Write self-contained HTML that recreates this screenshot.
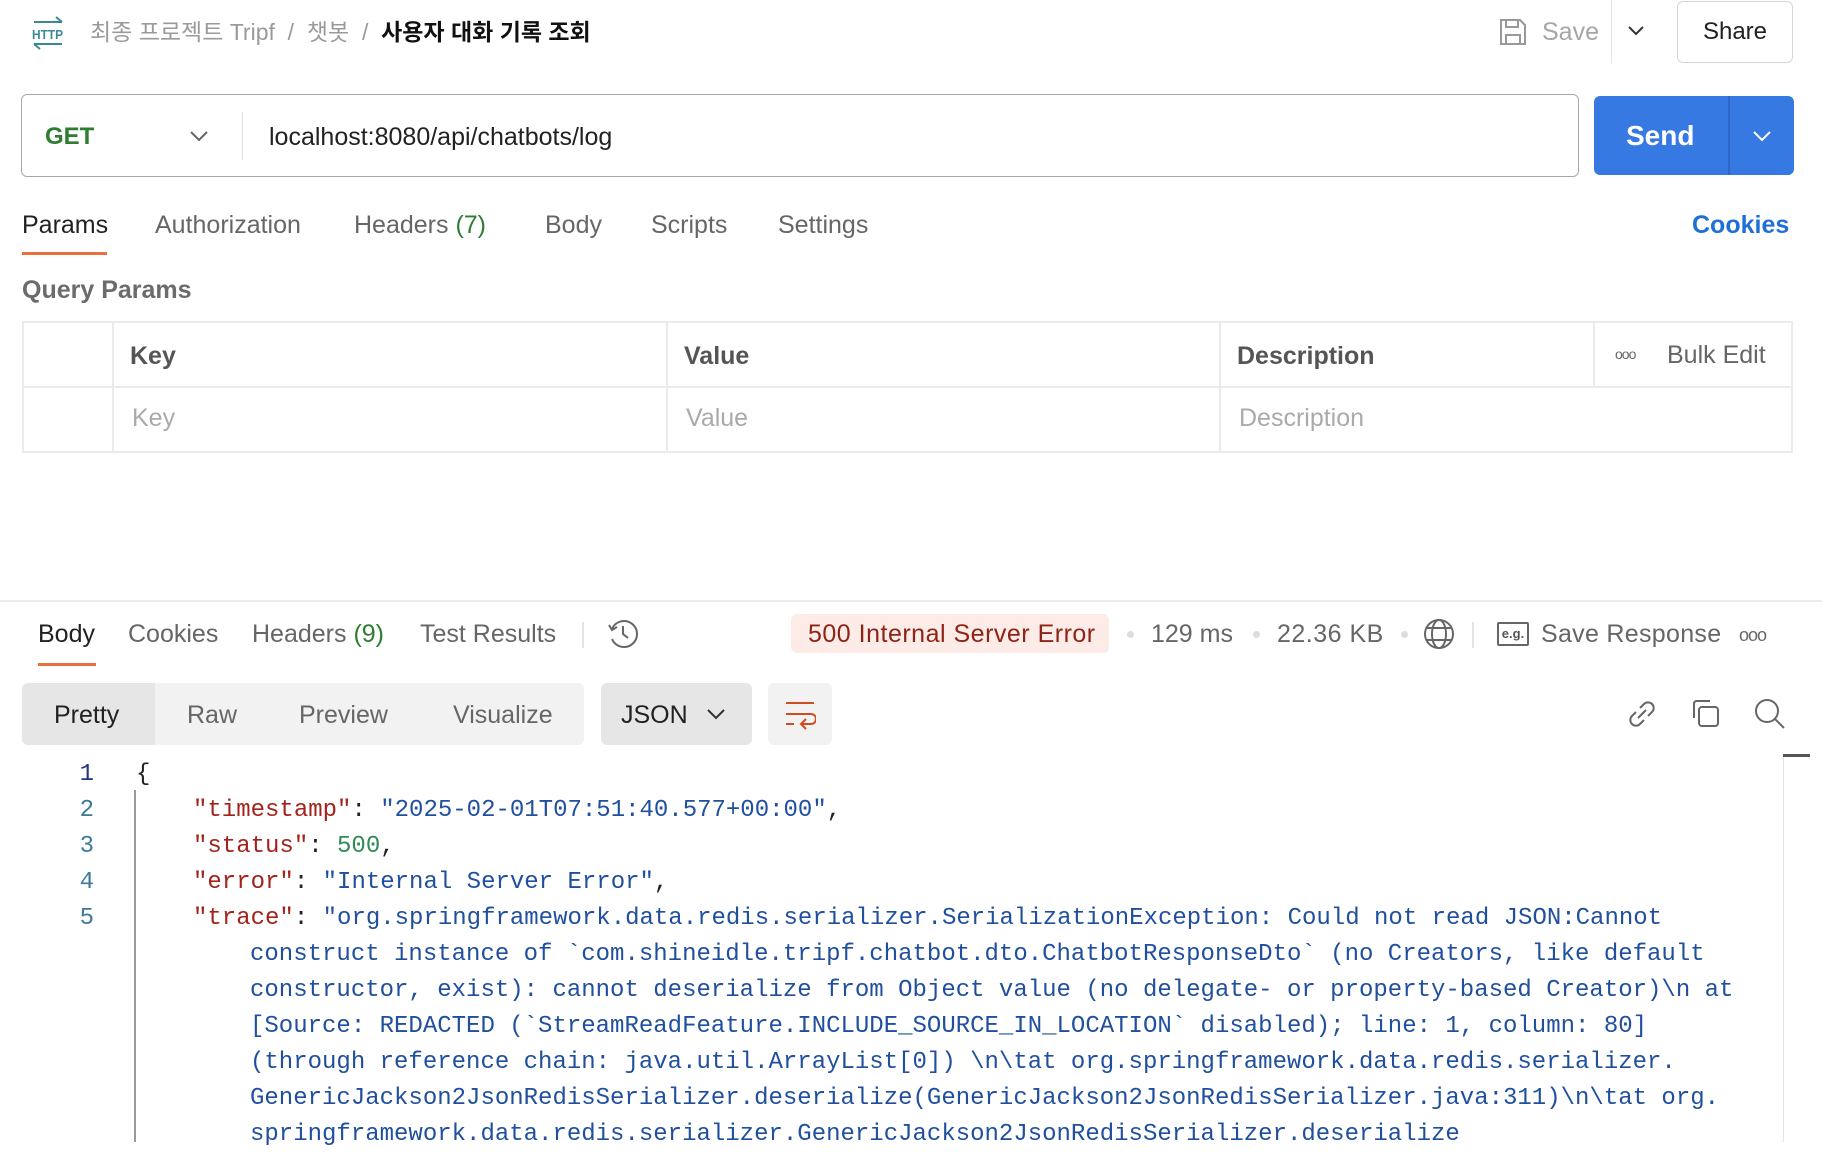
<!DOCTYPE html>
<html><head><meta charset="utf-8">
<style>
*{margin:0;padding:0;box-sizing:border-box}
body{width:1822px;height:1142px;overflow:hidden;background:#fff;position:relative;font-family:"Liberation Sans","Noto Sans CJK KR",sans-serif;color:#212121}
.a{position:absolute;white-space:nowrap}
.t{font-size:25px;line-height:28px}
.mono{font-family:"Liberation Mono",monospace;font-size:24px;line-height:36px;color:#1f4f9e}
.k{color:#a3231c}.n{color:#2e8b57}.p{color:#212121}
.ln{position:absolute;left:60px;width:34px;text-align:right;font-family:"Liberation Mono",monospace;font-size:24px;line-height:36px;color:#3c7a9a}
</style></head><body>

<!-- header -->
<svg class="a" style="left:30px;top:16px" width="36" height="34" viewBox="0 0 36 34"><path d="M4 6H32M26 1L32 6" stroke="#3a8a95" stroke-width="2" fill="none"/><text x="2" y="23" font-family="Liberation Sans" font-size="13" fill="#3a8a95" font-weight="bold" textLength="31" lengthAdjust="spacingAndGlyphs">HTTP</text><path d="M4 28H32M4 28L10 33" stroke="#3a8a95" stroke-width="2" fill="none"/></svg>
<div class="a" style="left:90px;top:18px;font-size:23px;line-height:28px;color:#9a9a9a">최종 프로젝트 Tripf &nbsp;/&nbsp; 챗봇 &nbsp;/&nbsp; <span style="color:#111;font-weight:bold">사용자 대화 기록 조회</span></div>

<svg class="a" style="left:1498px;top:17px" width="30" height="30" viewBox="0 0 30 30" fill="none" stroke="#999" stroke-width="2"><path d="M3 3H22L27 8V27H3Z"/><path d="M8 3V10H20V3M8 27V18H22V27"/></svg>
<div class="a t" style="left:1542px;top:18px;color:#a6a6a6">Save</div>
<div class="a" style="left:1611px;top:0;width:1px;height:63px;background:#e4e4e4"></div>
<svg class="a" style="left:1627px;top:25px" width="18" height="12"><path d="M2 2L9 9L16 2" stroke="#333" stroke-width="2" fill="none"/></svg>
<div class="a" style="left:1677px;top:1px;width:116px;height:62px;border:1.5px solid #d6d6d6;border-radius:6px;text-align:center;line-height:60px;font-size:24px;color:#212121">Share</div>

<!-- URL bar -->
<div class="a" style="left:21px;top:94px;width:1558px;height:83px;border:1.5px solid #a9a9a9;border-radius:6px"></div>
<div class="a" style="left:45px;top:122px;font-size:24px;font-weight:bold;color:#2e7d32;line-height:30px">GET</div>
<svg class="a" style="left:189px;top:130px" width="20" height="12"><path d="M2 2L10 10L18 2" stroke="#666" stroke-width="2" fill="none"/></svg>
<div class="a" style="left:242px;top:112px;width:1px;height:48px;background:#e0e0e0"></div>
<div class="a" style="left:269px;top:122px;font-size:25px;line-height:30px;color:#212121">localhost:8080/api/chatbots/log</div>
<div class="a" style="left:1594px;top:96px;width:200px;height:79px;background:#3779e2;border-radius:6px"></div>
<div class="a" style="left:1728px;top:96px;width:2px;height:79px;background:#2e68c6"></div>
<div class="a" style="left:1626px;top:120px;font-size:28px;font-weight:bold;color:#fff;line-height:32px">Send</div>
<svg class="a" style="left:1752px;top:130px" width="20" height="12"><path d="M2 2L10 10L18 2" stroke="#fff" stroke-width="2" fill="none"/></svg>

<!-- request tabs -->
<div class="a t" style="left:22px;top:211px;color:#212121">Params</div>
<div class="a" style="left:22px;top:252px;width:85px;height:3px;background:#e9703e"></div>
<div class="a t" style="left:155px;top:211px;color:#666">Authorization</div>
<div class="a t" style="left:354px;top:211px;color:#666">Headers <span style="color:#2e7d32">(7)</span></div>
<div class="a t" style="left:545px;top:211px;color:#666">Body</div>
<div class="a t" style="left:651px;top:211px;color:#666">Scripts</div>
<div class="a t" style="left:778px;top:211px;color:#666">Settings</div>
<div class="a t" style="left:1692px;top:211px;color:#1f6fd8;font-weight:bold">Cookies</div>
<div class="a t" style="left:22px;top:276px;color:#6b6b6b;font-weight:bold">Query Params</div>

<!-- table -->
<div class="a" style="left:22px;top:321px;width:1771px;height:132px;border:2px solid #ebebeb"></div>
<div class="a" style="left:22px;top:386px;width:1771px;height:2px;background:#ebebeb"></div>
<div class="a" style="left:112px;top:321px;width:2px;height:132px;background:#ebebeb"></div>
<div class="a" style="left:666px;top:321px;width:2px;height:132px;background:#ebebeb"></div>
<div class="a" style="left:1219px;top:321px;width:2px;height:132px;background:#ebebeb"></div>
<div class="a" style="left:1593px;top:321px;width:2px;height:66px;background:#ebebeb"></div>
<div class="a t" style="left:130px;top:342px;color:#555;font-weight:bold">Key</div>
<div class="a t" style="left:684px;top:342px;color:#555;font-weight:bold">Value</div>
<div class="a t" style="left:1237px;top:342px;color:#555;font-weight:bold">Description</div>
<div class="a" style="left:1615px;top:346px;font-size:14px;color:#666;letter-spacing:-1px">ooo</div>
<div class="a t" style="left:1667px;top:341px;color:#666">Bulk Edit</div>
<div class="a t" style="left:132px;top:404px;color:#aaa">Key</div>
<div class="a t" style="left:686px;top:404px;color:#aaa">Value</div>
<div class="a t" style="left:1239px;top:404px;color:#aaa">Description</div>

<!-- response -->
<div class="a" style="left:0;top:600px;width:1822px;height:2px;background:#ededed"></div>
<div class="a t" style="left:38px;top:620px;color:#212121">Body</div>
<div class="a" style="left:38px;top:663px;width:58px;height:3px;background:#e9703e"></div>
<div class="a t" style="left:128px;top:620px;color:#666">Cookies</div>
<div class="a t" style="left:252px;top:620px;color:#666">Headers <span style="color:#2e7d32">(9)</span></div>
<div class="a t" style="left:420px;top:620px;color:#666">Test Results</div>
<div class="a" style="left:582px;top:622px;width:2px;height:26px;background:#e4e4e4"></div>
<svg class="a" style="left:606px;top:617px" width="34" height="34" viewBox="0 0 34 34" fill="none" stroke="#666" stroke-width="2"><path d="M6 12A13 13 0 1 1 6 22"/><path d="M3 8L6 13L11 10"/><path d="M17 9V17L22 21"/></svg>
<div class="a" style="left:791px;top:614px;width:318px;height:39px;background:#fcebe6;border-radius:6px"></div>
<div class="a" style="left:808px;top:620px;font-size:25px;line-height:28px;color:#8e2318;letter-spacing:0.5px">500 Internal Server Error</div>
<div class="a" style="left:1127px;top:631px;width:7px;height:7px;border-radius:50%;background:#ddd"></div>
<div class="a t" style="left:1151px;top:620px;color:#666">129 ms</div>
<div class="a" style="left:1253px;top:631px;width:7px;height:7px;border-radius:50%;background:#ddd"></div>
<div class="a t" style="left:1277px;top:620px;color:#666;letter-spacing:0.5px">22.36 KB</div>
<div class="a" style="left:1401px;top:631px;width:7px;height:7px;border-radius:50%;background:#ddd"></div>
<svg class="a" style="left:1422px;top:617px" width="34" height="34" viewBox="0 0 34 34" fill="none" stroke="#666" stroke-width="2"><circle cx="17" cy="17" r="14"/><ellipse cx="17" cy="17" rx="7" ry="14"/><path d="M4 11H30M4 23H30"/></svg>
<div class="a" style="left:1472px;top:622px;width:2px;height:26px;background:#e4e4e4"></div>
<div class="a" style="left:1497px;top:622px;width:32px;height:24px;border:2px solid #666;border-radius:2px;font-size:13px;line-height:20px;text-align:center;color:#555;font-weight:bold">e.g.</div>
<div class="a t" style="left:1541px;top:620px;color:#666;letter-spacing:0.3px">Save Response</div>
<div class="a" style="left:1739px;top:625px;font-size:18px;line-height:20px;color:#666;letter-spacing:-1px">ooo</div>

<!-- toolbar -->
<div class="a" style="left:22px;top:683px;width:562px;height:62px;background:#f2f2f2;border-radius:6px"></div>
<div class="a" style="left:22px;top:683px;width:133px;height:62px;background:#e6e6e6;border-radius:6px 0 0 6px"></div>
<div class="a t" style="left:54px;top:701px;color:#212121">Pretty</div>
<div class="a t" style="left:187px;top:701px;color:#666">Raw</div>
<div class="a t" style="left:299px;top:701px;color:#666">Preview</div>
<div class="a t" style="left:453px;top:701px;color:#666">Visualize</div>
<div class="a" style="left:601px;top:683px;width:151px;height:62px;background:#e6e6e6;border-radius:6px"></div>
<div class="a t" style="left:621px;top:701px;color:#212121">JSON</div>
<svg class="a" style="left:706px;top:708px" width="20" height="12"><path d="M2 2L10 10L18 2" stroke="#333" stroke-width="2" fill="none"/></svg>
<div class="a" style="left:768px;top:683px;width:64px;height:62px;background:#f2f2f2;border-radius:6px"></div>
<svg class="a" style="left:784px;top:700px" width="32" height="30" viewBox="0 0 32 30" fill="none" stroke="#d34a1e" stroke-width="2"><path d="M2 3H30M2 14H27A5 5 0 0 1 27 24H18M2 24H10M22 19L17 24L22 29"/></svg>
<svg class="a" style="left:1626px;top:698px" width="32" height="32" viewBox="0 0 32 32" fill="none" stroke="#666" stroke-width="2"><path d="M14 10L18 6A5 5 0 0 1 26 14L22 18M18 22L14 26A5 5 0 0 1 6 18L10 14M12 20L20 12"/></svg>
<svg class="a" style="left:1690px;top:699px" width="30" height="30" viewBox="0 0 30 30" fill="none" stroke="#666" stroke-width="2"><path d="M4 19V5Q4 2 7 2H20"/><rect x="9" y="8" width="19" height="19" rx="3"/></svg>
<svg class="a" style="left:1754px;top:698px" width="32" height="32" viewBox="0 0 32 32" fill="none" stroke="#666" stroke-width="2"><circle cx="13" cy="13" r="11"/><path d="M21 21L30 30"/></svg>

<!-- code -->
<div class="a" style="left:1783px;top:754px;width:1px;height:388px;background:#e4e4e4"></div>
<div class="a" style="left:1783px;top:754px;width:27px;height:3px;background:#555"></div>
<div class="a" style="left:134px;top:790px;width:2px;height:352px;background:#999"></div>
<div class="ln" style="top:757px;color:#24347f">1</div>
<div class="ln" style="top:793px">2</div>
<div class="ln" style="top:829px">3</div>
<div class="ln" style="top:865px">4</div>
<div class="ln" style="top:901px">5</div>
<div class="a mono p" style="left:136px;top:757px">{</div>
<div class="a mono" style="left:193px;top:793px"><span class="k">"timestamp"</span><span class="p">: </span>"2025-02-01T07:51:40.577+00:00"<span class="p">,</span></div>
<div class="a mono" style="left:193px;top:829px"><span class="k">"status"</span><span class="p">: </span><span class="n">500</span><span class="p">,</span></div>
<div class="a mono" style="left:193px;top:865px"><span class="k">"error"</span><span class="p">: </span>"Internal Server Error"<span class="p">,</span></div>
<div class="a mono" style="left:193px;top:901px"><span class="k">"trace"</span><span class="p">: </span>"org.springframework.data.redis.serializer.SerializationException: Could not read JSON:Cannot</div>
<div class="a mono" style="left:250px;top:937px">construct instance of `com.shineidle.tripf.chatbot.dto.ChatbotResponseDto` (no Creators, like default</div>
<div class="a mono" style="left:250px;top:973px">constructor, exist): cannot deserialize from Object value (no delegate- or property-based Creator)\n at</div>
<div class="a mono" style="left:250px;top:1009px">[Source: REDACTED (`StreamReadFeature.INCLUDE_SOURCE_IN_LOCATION` disabled); line: 1, column: 80]</div>
<div class="a mono" style="left:250px;top:1045px">(through reference chain: java.util.ArrayList[0]) \n\tat org.springframework.data.redis.serializer.</div>
<div class="a mono" style="left:250px;top:1081px">GenericJackson2JsonRedisSerializer.deserialize(GenericJackson2JsonRedisSerializer.java:311)\n\tat org.</div>
<div class="a mono" style="left:250px;top:1117px">springframework.data.redis.serializer.GenericJackson2JsonRedisSerializer.deserialize</div>
</body></html>
